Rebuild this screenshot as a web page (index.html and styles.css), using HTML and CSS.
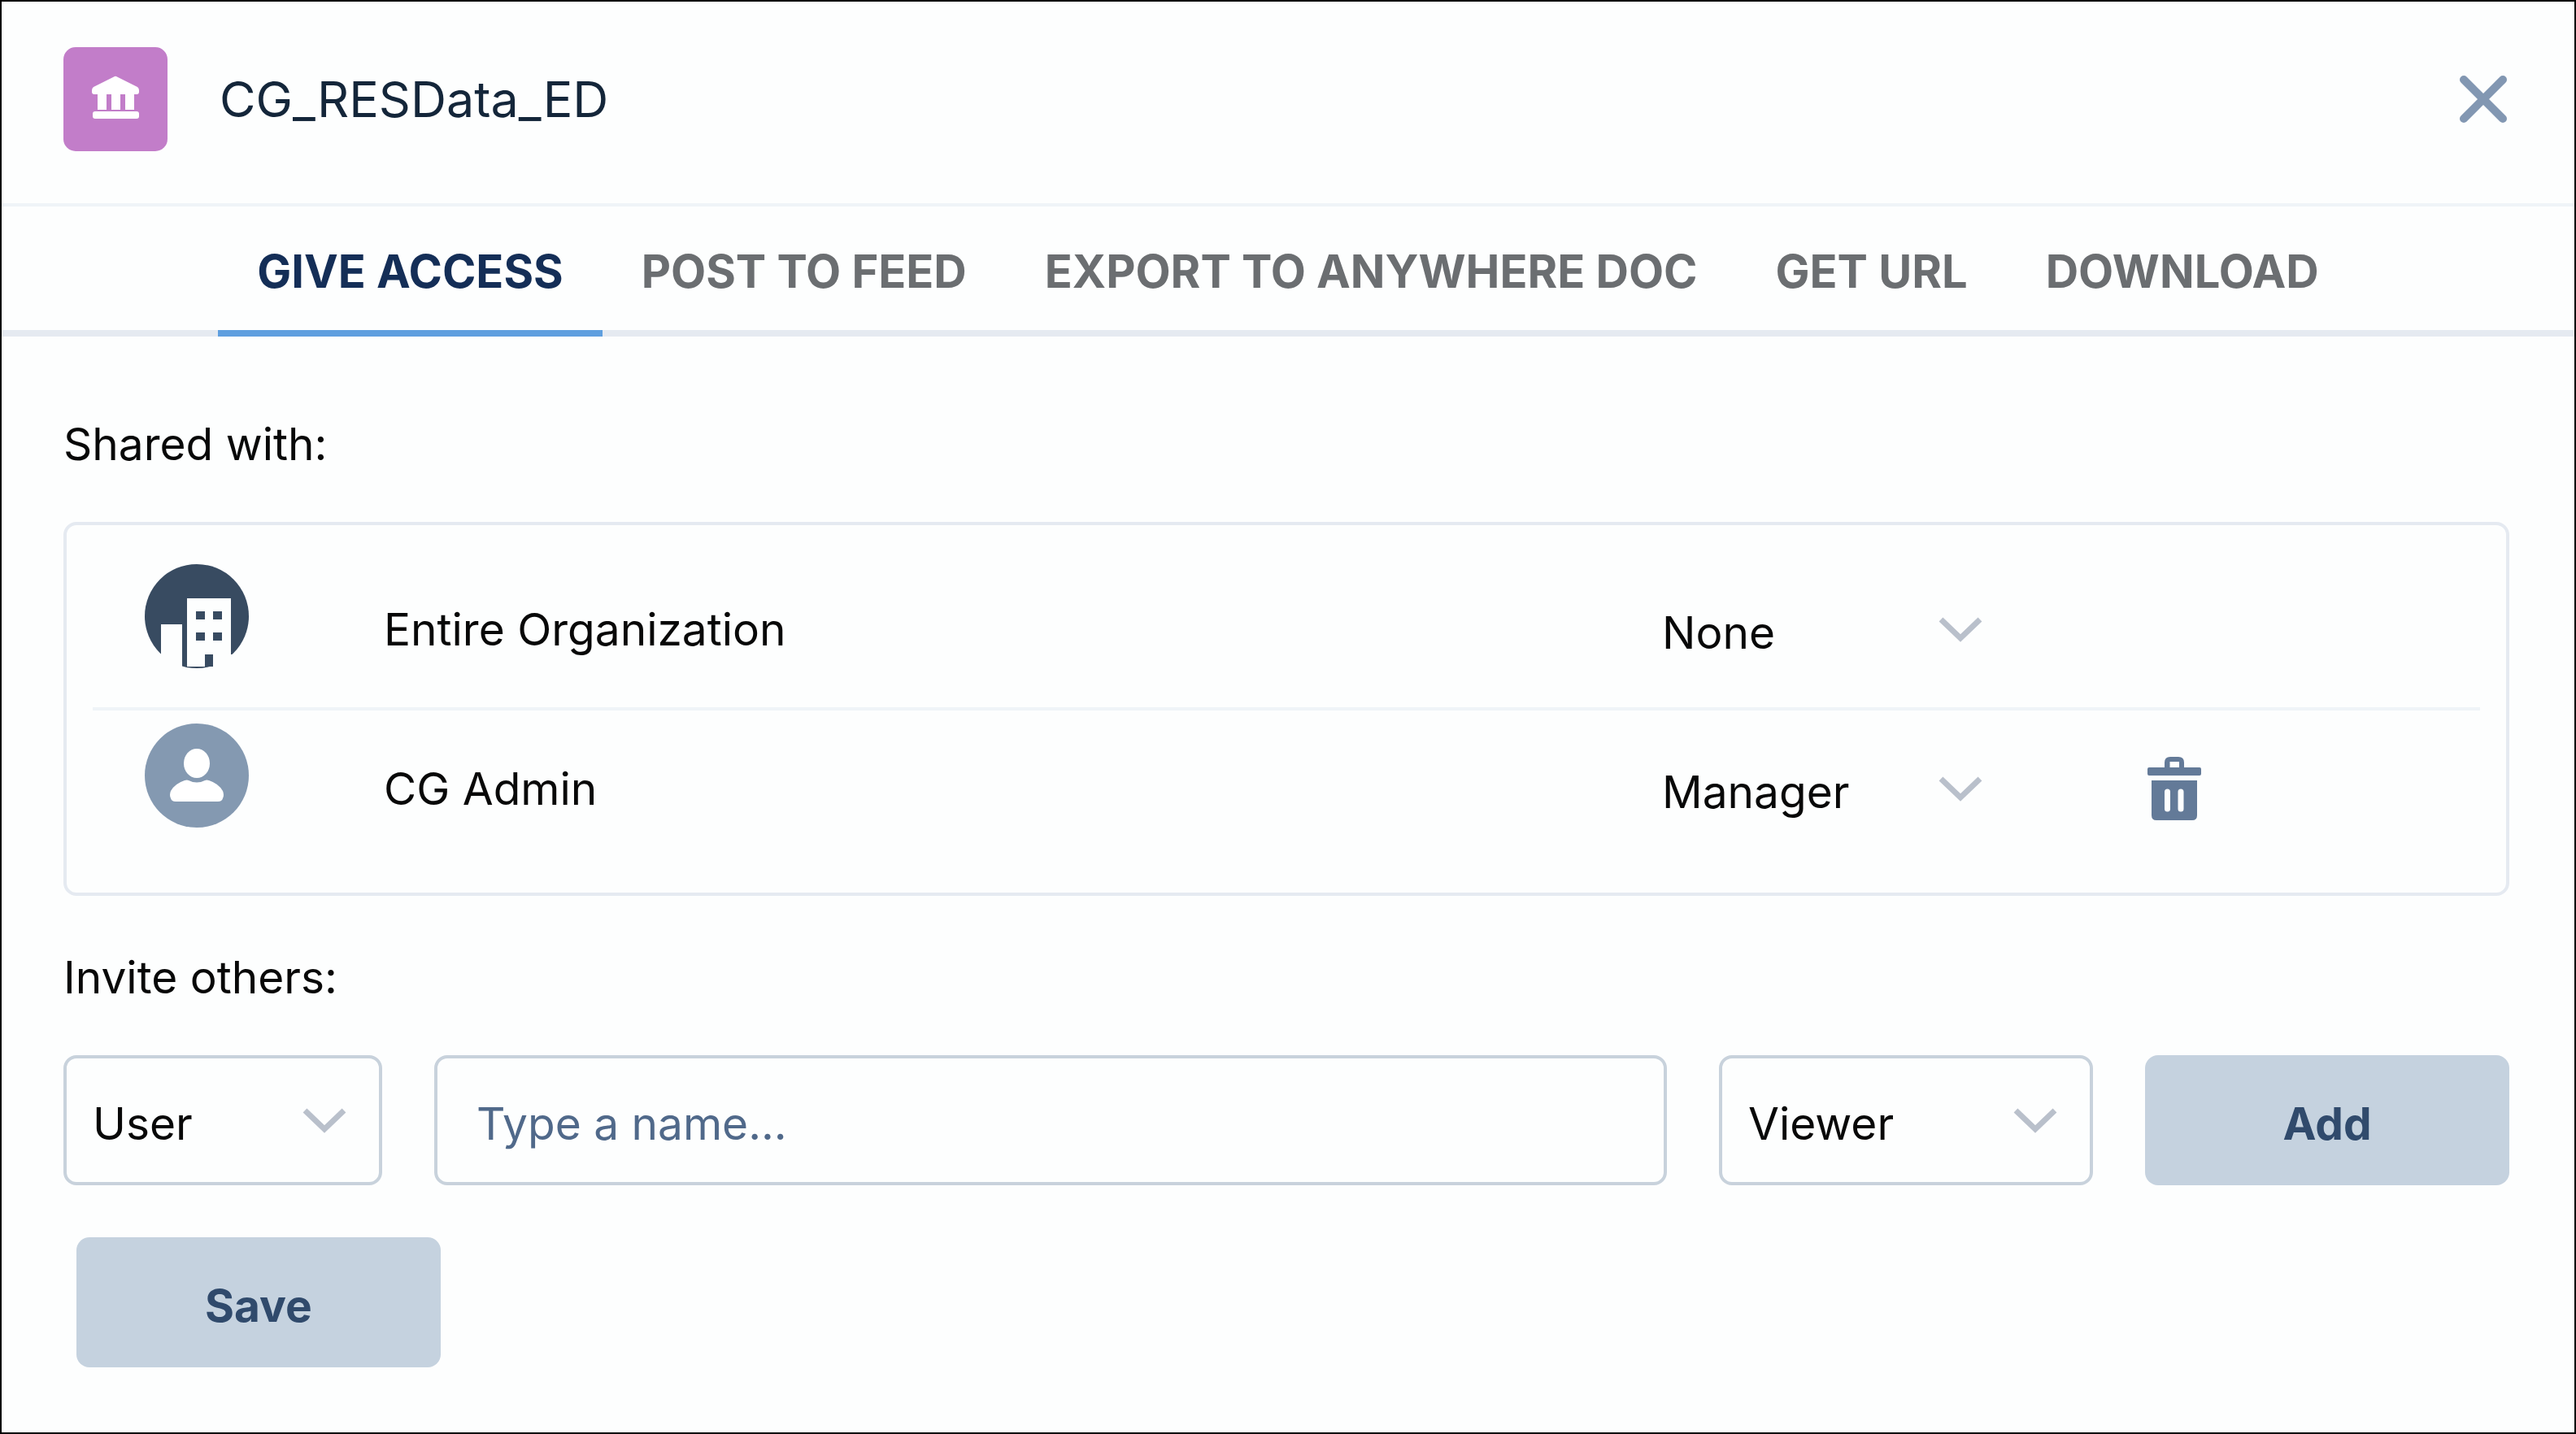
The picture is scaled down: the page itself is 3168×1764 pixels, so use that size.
FILE: index.html
```html
<!DOCTYPE html>
<html lang="en">
<head>
    <meta charset="UTF-8">
    <meta name="viewport" content="width=device-width, initial-scale=1.0">
    <title>CG_RESData_ED</title>
    <link rel="stylesheet" href="styles.css">
</head>
<body>
    <div class="dialog">
        <header class="dialog-header">
            <svg class="asset-icon" viewBox="0 0 128 128" aria-hidden="true">
                <rect width="128" height="128" rx="15" fill="#c27dc9"/>
                <g fill="#fff">
                    <path d="M62 36.500q2-1.500 4 0L91 49q2 1.500 2 4v2q0 3-3 3H38q-3 0-3-3v-2q0-2.500 2-4z"/>
                    <path d="M42 55h11v22H42zM59 55h11v22H59zM76 55h11v22H76z"/>
                    <rect x="36" y="79" width="57" height="9" rx="3"/>
                </g>
            </svg>
            <h1>CG_RESData_ED</h1>
            <button class="icon-button close-button" type="button" aria-label="Close">
                <svg class="close-icon" viewBox="0 0 60 60">
                    <path d="M6 6l48 48M54 6L6 54" fill="none" stroke="#8297b2" stroke-width="10" stroke-linecap="round"/>
                </svg>
            </button>
        </header>

        <nav class="tabs">
            <a href="#access" class="tab active">GIVE ACCESS</a>
            <a href="#feed" class="tab">POST TO FEED</a>
            <a href="#export" class="tab">EXPORT TO ANYWHERE DOC</a>
            <a href="#url" class="tab">GET URL</a>
            <a href="#download" class="tab">DOWNLOAD</a>
        </nav>

        <form class="dialog-body" id="access">
            <h2>Shared with:</h2>
            <ul class="share-list">
                <li class="share-row">
                    <svg class="avatar" viewBox="0 0 128 128" aria-hidden="true">
                        <circle cx="64" cy="64" r="64" fill="#384b61"/>
                        <path d="M20 74h26v54H20zM52 42h54v84H52z" fill="#fdfefe"/>
                        <path d="M63 58h11v10H63zM84 58h11v10H84zM63 84h11v10H63zM84 84h11v10H84zM74 111h10v15H74z" fill="#384b61"/>
                        <path d="M84 111h24v17H84z" fill="#fdfefe"/>
                    </svg>
                    <span class="share-name">Entire Organization</span>
                    <div class="select">
                        <select aria-label="Access for Entire Organization">
                            <option>None</option>
                            <option>Viewer</option>
                            <option>Manager</option>
                        </select>
                        <svg class="chevron" viewBox="0 0 54 32"><path d="M3 4l24 23L51 4"/></svg>
                    </div>
                </li>
                <li class="share-row">
                    <svg class="avatar" viewBox="0 0 128 128" aria-hidden="true">
                        <circle cx="64" cy="64" r="64" fill="#8499b1"/>
                        <ellipse cx="64" cy="49" rx="16" ry="18" fill="#fff"/>
                        <path d="M49 70q3-1 5 0 10 5 20 0 2-1 5 0 12 4 17 13 2 5 0 9-1 4-6 4H38q-5 0-6-4-2-4 0-9 5-9 17-13z" fill="#fff"/>
                    </svg>
                    <span class="share-name">CG Admin</span>
                    <div class="select">
                        <select aria-label="Access for CG Admin">
                            <option>Manager</option>
                            <option>Viewer</option>
                        </select>
                        <svg class="chevron" viewBox="0 0 54 32"><path d="M3 4l24 23L51 4"/></svg>
                    </div>
                    <button class="icon-button" type="button" aria-label="Remove CG Admin">
                        <svg class="trash-icon" viewBox="0 0 68 78">
                            <path fill="#637a98" fill-rule="evenodd" d="M22 13V7q0-7 7-7h10q7 0 7 7v6h19q2 0 2 2v6q0 2-2 2H3q-2 0-2-2v-6q0-2 2-2zM28.500 13H40V6H28.500zM6 29h56v43q0 6-6 6H12q-6 0-6-6zM22 43v21a3.500 3.500 0 0 0 7 0V43a3.500 3.500 0 0 0-7 0zM38.500 43v21a3.500 3.500 0 0 0 7 0V43a3.500 3.500 0 0 0-7 0z"/>
                        </svg>
                    </button>
                </li>
            </ul>

            <h2>Invite others:</h2>
            <div class="invite-row">
                <div class="select boxed">
                    <select aria-label="Invite type">
                        <option>User</option>
                        <option>Group</option>
                    </select>
                    <svg class="chevron" viewBox="0 0 54 32"><path d="M3 4l24 23L51 4"/></svg>
                </div>
                <input class="name-input" type="text" placeholder="Type a name..." aria-label="Name">
                <div class="select boxed">
                    <select aria-label="Role">
                        <option>Viewer</option>
                        <option>Manager</option>
                    </select>
                    <svg class="chevron" viewBox="0 0 54 32"><path d="M3 4l24 23L51 4"/></svg>
                </div>
                <button class="button" type="button">Add</button>
            </div>
            <button class="button save-button" type="submit">Save</button>
        </form>
    </div>
</body>
</html>
```
FILE: styles.css
```css
:root {
    --text-color: #080808;
    --line-color: #e5eaf1;
    --light-line-color: #eff4f8;
    --control-border: #c8d2dc;
    --button-bg: #c5d2df;
    --button-text: #304a6c;
}

* {
    box-sizing: border-box;
}

body {
    margin: 0;
    font-family: Inter, "Liberation Sans", sans-serif;
    font-size: 55px;
    line-height: 64px;
    color: var(--text-color);
}

.dialog {
    min-height: 100vh;
    border: 2px solid #000;
    background: #fdfefe;
}

.dialog-header {
    display: flex;
    align-items: center;
    gap: 64px;
    padding: 56px 82px 64px 76px;
    border-bottom: 4px solid var(--light-line-color);
}

.asset-icon,
.avatar {
    display: block;
    width: 128px;
    height: 128px;
}

h1 {
    margin: 0;
    font-size: 61px;
    font-weight: 400;
    line-height: 72px;
    color: #14263a;
}

h2 {
    margin: 0;
    font-size: 55px;
    font-weight: 400;
}

.icon-button {
    padding: 0;
    border: none;
    background: none;
    cursor: pointer;
}

.icon-button svg {
    display: block;
}

.close-button {
    margin-left: auto;
}

.close-icon {
    width: 60px;
    height: 60px;
}

/* Tabs */
.tabs {
    display: flex;
    justify-content: center;
    border-bottom: 8px solid var(--line-color);
}

.tab {
    margin-bottom: -8px;
    padding: 48px 48px 40px;
    border-bottom: 8px solid transparent;
    font-size: 56px;
    font-weight: 700;
    color: #6b6e71;
    text-decoration: none;
}

.tab.active {
    border-color: #5f9fdf;
    color: #142e57;
}

.dialog-body {
    padding: 100px 80px 80px 76px;
}

/* People who already have access */
.share-list {
    margin: 64px 0 68px;
    padding: 32px;
    border: 4px solid var(--line-color);
    border-radius: 16px;
    list-style: none;
}

.share-row {
    display: grid;
    grid-template-columns: 128px 1fr 596px 346px;
    align-items: center;
    height: 192px;
    padding: 0 64px;
}

.share-row + .share-row {
    height: 196px;
    border-top: 4px solid var(--light-line-color);
}

.avatar {
    align-self: start;
    margin-top: 16px;
}

.share-name {
    padding-left: 166px;
}

.select {
    display: grid;
    align-items: center;
}

.share-row .select {
    width: 394px;
}

.select select,
.chevron {
    grid-area: 1 / 1;
}

.select select {
    width: 100%;
    height: 100%;
    margin: 0;
    padding: 8px 96px 0 0;
    border: none;
    appearance: none;
    background: none;
    font: inherit;
    color: inherit;
}

.chevron {
    justify-self: end;
    width: 54px;
    height: 32px;
    pointer-events: none;
}

.chevron path {
    fill: none;
    stroke: #b9c0cb;
    stroke-width: 7px;
}

.trash-icon {
    width: 68px;
    height: 78px;
}

/* Invite form */
.invite-row {
    display: grid;
    grid-template-columns: 392px 1fr 460px 448px;
    gap: 64px;
    margin: 64px 0;
}

.select.boxed,
.name-input,
.button {
    height: 160px;
    border-radius: 16px;
}

.select.boxed,
.name-input {
    border: 4px solid var(--control-border);
}

.select.boxed select {
    padding-left: 32px;
}

.select.boxed .chevron {
    margin-right: 40px;
}

.name-input {
    width: 100%;
    padding: 8px 48px 0;
    background: none;
    font: inherit;
    color: var(--text-color);
}

.name-input::placeholder {
    color: #50698a;
    opacity: 1;
}

.button {
    width: 448px;
    padding: 8px 0 0;
    border: none;
    background: var(--button-bg);
    font: inherit;
    font-weight: 700;
    color: var(--button-text);
    cursor: pointer;
}

.save-button {
    display: block;
    margin-left: 16px;
}
```
